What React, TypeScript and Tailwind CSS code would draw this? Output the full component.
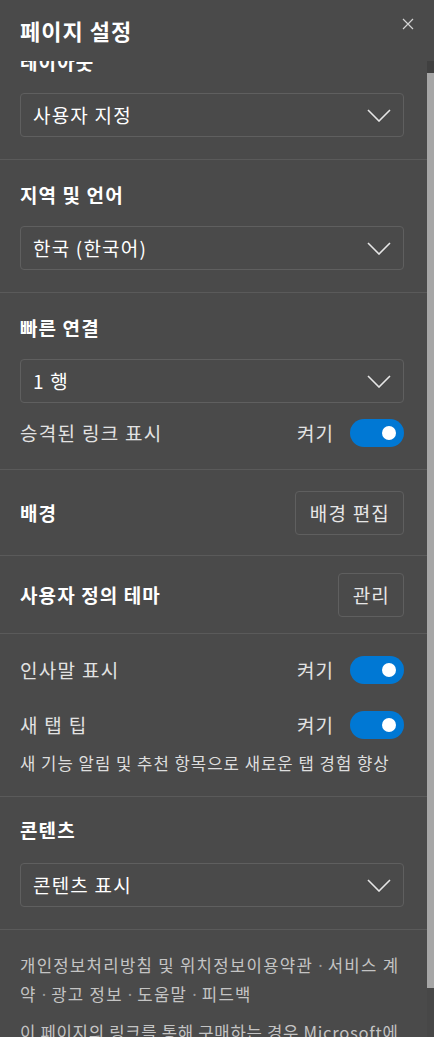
import { useLayoutEffect, useRef } from "react";

const font = { fontFamily: '"Noto Sans CJK KR", "Noto Sans", sans-serif' };

function Chevron() {
  return (
    <svg width="24" height="13" viewBox="0 0 24 13" fill="none">
      <path d="M1 1l11 11L23 1" stroke="#e6e6e6" strokeWidth="1.6" />
    </svg>
  );
}

function Dropdown({ value }: { value: string }) {
  return (
    <div className="h-[44px] border border-[#5f5f5f] rounded-[4px] pl-[12px] pr-[12px] flex items-center justify-between">
      <span className="text-[19px] leading-[26px] tracking-[1.2px] text-white">{value}</span>
      <Chevron />
    </div>
  );
}

function Toggle({ label }: { label: string }) {
  return (
    <div className="h-[28px] flex items-center justify-between">
      <span className="text-[19px] leading-[26px] tracking-[1.3px] text-[#e2e2e2]">{label}</span>
      <div className="flex items-center gap-[16px]">
        <span className="text-[19px] leading-[26px] tracking-[1px] text-[#e2e2e2]">켜기</span>
        <div className="w-[54px] h-[28px] rounded-full bg-[#0078d4] flex items-center justify-end pr-[8px]">
          <div className="w-[14px] h-[14px] rounded-full bg-white" />
        </div>
      </div>
    </div>
  );
}

function Heading({ children }: { children: string }) {
  return (
    <h2 className="text-[19px] leading-[26px] tracking-[1.1px] font-bold text-white">{children}</h2>
  );
}

// latin middle dot is narrow, the CJK one is full width
function Dot() {
  return <span className="mx-[5px] font-['Noto_Sans'] tracking-normal text-[#9a9a9a]">·</span>;
}

export default function App() {
  const scrollRef = useRef<HTMLDivElement>(null);

  useLayoutEffect(() => {
    if (scrollRef.current) scrollRef.current.scrollTop = 12;
  }, []);

  return (
    <div className="h-[1037px] w-[434px] flex flex-col bg-[#4a4a4a] overflow-hidden" style={font}>
      <div className="h-[61px] shrink-0 flex justify-between pl-5 pr-[20px] pt-[16px]">
        <h1 className="text-[22px] leading-[28px] tracking-[1px] font-bold text-white">페이지 설정</h1>
        <svg width="12" height="12" viewBox="0 0 12 12" className="mt-[2px]">
          <path d="M1 1l10 10M11 1L1 11" stroke="#d4d4d4" strokeWidth="1.2" />
        </svg>
      </div>

      <div className="flex-1 min-h-0 flex">
        <div ref={scrollRef} className="flex-1 min-w-0 overflow-hidden">
          <section className="border-b border-[#5a5a5a] pl-5 pr-[23px] pb-[22px]">
            <Heading>레이아웃</Heading>
            <div className="mt-[18px]">
              <Dropdown value="사용자 지정" />
            </div>
          </section>

          <section className="border-b border-[#5a5a5a] pl-5 pr-[23px] pt-[22px] pb-[22px]">
            <Heading>지역 및 언어</Heading>
            <div className="mt-[18px]">
              <Dropdown value="한국 (한국어)" />
            </div>
          </section>

          <section className="border-b border-[#5a5a5a] pl-5 pr-[23px] pt-[22px] pb-[22px]">
            <Heading>빠른 연결</Heading>
            <div className="mt-[18px]">
              <Dropdown value="1 행" />
            </div>
            <div className="mt-[16px]">
              <Toggle label="승격된 링크 표시" />
            </div>
          </section>

          <section className="border-b border-[#5a5a5a] pl-5 pr-[23px] pt-[21px] pb-[20px] flex items-center justify-between">
            <Heading>배경</Heading>
            <button className="h-[44px] pl-[14px] pr-[13px] border border-[#5f5f5f] rounded-[4px] text-[19px] leading-[26px] tracking-[1.2px] text-[#e6e6e6]">
              배경 편집
            </button>
          </section>

          <section className="border-b border-[#5a5a5a] pl-5 pr-[23px] pt-[17px] pb-[16px] flex items-center justify-between">
            <Heading>사용자 정의 테마</Heading>
            <button className="h-[44px] pl-[14px] pr-[13px] border border-[#5f5f5f] rounded-[4px] text-[19px] leading-[26px] tracking-[1.2px] text-[#e6e6e6]">
              관리
            </button>
          </section>

          <section className="border-b border-[#5a5a5a] pl-5 pr-[23px] pt-[22px] pb-[21px]">
            <Toggle label="인사말 표시" />
            <div className="mt-[27px]">
              <Toggle label="새 탭 팁" />
            </div>
            <p className="mt-[12px] text-[16.7px] leading-[24px] tracking-[1px] text-[#dedede]">
              새 기능 알림 및 추천 항목으로 새로운 탭 경험 향상
            </p>
          </section>

          <section className="border-b border-[#5a5a5a] pl-5 pr-[23px] pt-[20px] pb-[22px]">
            <Heading>콘텐츠</Heading>
            <div className="mt-[20px]">
              <Dropdown value="콘텐츠 표시" />
            </div>
          </section>

          <footer className="pl-5 pr-[23px] pt-[21px] pb-[18px] text-[16.7px] leading-[28px] text-[#c4c4c4] break-all">
            <p className="tracking-[1.3px]">
              개인정보처리방침 및 위치정보이용약관<Dot />서비스 계약<Dot />광고 정보<Dot />도움말<Dot />피드백
            </p>
            <p className="mt-[9px] tracking-[0.7px]">
              이 페이지의 링크를 통해 구매하는 경우 Microsoft에서 보상을 받을 수 있습니다.
            </p>
          </footer>
        </div>

        <div className="w-[7px] shrink-0 flex flex-col bg-[#474747]">
          <div className="h-[12px] bg-[#404040]" />
          <div className="h-[915px] bg-[#a6a6a6]" />
        </div>
      </div>
    </div>
  );
}
